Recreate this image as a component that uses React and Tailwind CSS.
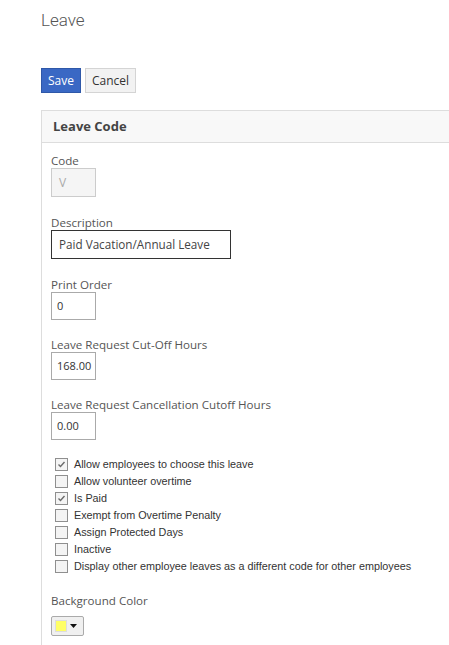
import React from "react";

const Check = ({ checked, label }) => (
  <label className="flex items-center h-[17px]">
    <span className="w-[13px] h-[13px] border border-[#8f8f8f] bg-[#f4f4f4] ml-[4px] mr-[6px] flex items-center justify-center shrink-0">
      {checked && (
        <svg width="9" height="9" viewBox="0 0 9 9">
          <path d="M1.5 4.5 L3.5 6.5 L7.5 2" fill="none" stroke="#6b6b6b" strokeWidth="1.4" />
        </svg>
      )}
    </span>
    <span className="text-[10.8px] text-[#333] whitespace-nowrap" style={{ fontFamily: "'Liberation Sans', Arial, sans-serif" }}>{label}</span>
  </label>
);

const Field = ({ label, children, className = "" }) => (
  <div className={className}>
    <div className="text-[11.6px] leading-[15px] text-[#555]">{label}</div>
    <div className="mt-[0px]">{children}</div>
  </div>
);

export default function App() {
  return (
    <div className="bg-white min-h-[645px] pl-[41px] pt-[10px] overflow-hidden" style={{ fontFamily: "'Open Sans', sans-serif" }}>
      <div className="text-[17px] leading-[20px] text-[#555] font-light" style={{ fontFamily: "Roboto, sans-serif" }}>Leave</div>
      <div className="flex gap-[4px] mt-[38px]">
        <button className="h-[25px] w-[40px] bg-[#3a68c4] border border-[#2f58a8] text-white text-[12px]">Save</button>
        <button className="h-[25px] w-[51px] bg-[#f2f2f2] border border-[#d4d4d4] text-[#333] text-[12px]">Cancel</button>
      </div>
      <div className="mt-[17px] border-l border-t border-[#ddd] w-[420px]">
        <div className="h-[32px] bg-[#f8f8f8] border-b border-[#ddd] flex items-center pl-[11px] text-[13px] font-bold text-[#444]">Leave Code</div>
        <div className="pl-[9px] pt-[10px] pb-[10px]">
          <Field label="Code">
            <div className="w-[45px] h-[29px] border border-[#ccc] bg-[#f5f5f5] text-[12px] text-[#aaa] flex items-center pl-[7px]">V</div>
          </Field>
          <Field label="Description" className="mt-[18px]">
            <div className="w-[180px] h-[29px] border border-[#333] text-[11.7px] text-[#444] flex items-center pl-[7px]">Paid Vacation/Annual Leave</div>
          </Field>
          <Field label="Print Order" className="mt-[18px]">
            <div className="w-[45px] h-[28px] border border-[#aaa] text-[11px] text-[#333] flex items-center pl-[5px]">0</div>
          </Field>
          <Field label="Leave Request Cut-Off Hours" className="mt-[17px]">
            <div className="w-[45px] h-[28px] border border-[#aaa] text-[11px] text-[#333] flex items-center pl-[5px]">168.00</div>
          </Field>
          <Field label="Leave Request Cancellation Cutoff Hours" className="mt-[17px]">
            <div className="w-[45px] h-[28px] border border-[#aaa] text-[11px] text-[#333] flex items-center pl-[5px]">0.00</div>
          </Field>
          <div className="mt-[16px] flex flex-col">
            <Check checked label="Allow employees to choose this leave" />
            <Check label="Allow volunteer overtime" />
            <Check checked label="Is Paid" />
            <Check label="Exempt from Overtime Penalty" />
            <Check label="Assign Protected Days" />
            <Check label="Inactive" />
            <Check label="Display other employee leaves as a different code for other employees" />
          </div>
          <Field label="Background Color" className="mt-[18px]">
            <div className="mt-[8px] w-[33px] h-[20px] border border-[#aaa] rounded-[2px] bg-[#f0f0f0] flex items-center pl-[3px] gap-[3px]">
              <span className="w-[12px] h-[12px] bg-[#ffff66] border border-[#ddd]"></span>
              <svg width="7" height="4" viewBox="0 0 7 4"><path d="M0 0 L7 0 L3.5 4 Z" fill="#111" /></svg>
            </div>
          </Field>
        </div>
      </div>
    </div>
  );
}
